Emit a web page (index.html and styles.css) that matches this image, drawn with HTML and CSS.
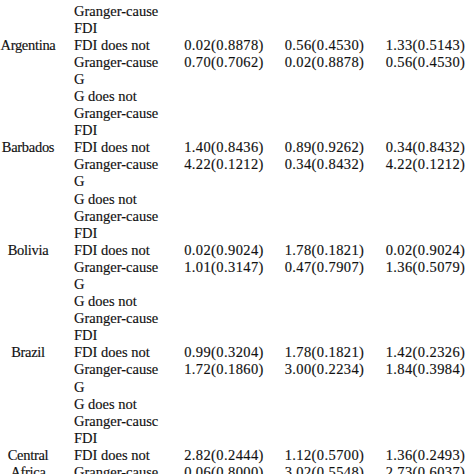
FILE: index.html
```html
<!DOCTYPE html>
<html>
<head>
<meta charset="utf-8">
<link rel="stylesheet" href="styles.css">
</head>
<body>
<div class="table">
  <div class="c"></div><div class="l">Granger-cause</div><div class="v"></div><div class="v"></div><div class="v"></div>
  <div class="c"></div><div class="l">FDI</div><div class="v"></div><div class="v"></div><div class="v"></div>
  <div class="c">Argentina</div><div class="l">FDI does not</div><div class="v">0.02(0.8878)</div><div class="v">0.56(0.4530)</div><div class="v">1.33(0.5143)</div>
  <div class="c"></div><div class="l">Granger-cause</div><div class="v">0.70(0.7062)</div><div class="v">0.02(0.8878)</div><div class="v">0.56(0.4530)</div>
  <div class="c"></div><div class="l">G</div><div class="v"></div><div class="v"></div><div class="v"></div>
  <div class="c"></div><div class="l">G does not</div><div class="v"></div><div class="v"></div><div class="v"></div>
  <div class="c"></div><div class="l">Granger-cause</div><div class="v"></div><div class="v"></div><div class="v"></div>
  <div class="c"></div><div class="l">FDI</div><div class="v"></div><div class="v"></div><div class="v"></div>
  <div class="c">Barbados</div><div class="l">FDI does not</div><div class="v">1.40(0.8436)</div><div class="v">0.89(0.9262)</div><div class="v">0.34(0.8432)</div>
  <div class="c"></div><div class="l">Granger-cause</div><div class="v">4.22(0.1212)</div><div class="v">0.34(0.8432)</div><div class="v">4.22(0.1212)</div>
  <div class="c"></div><div class="l">G</div><div class="v"></div><div class="v"></div><div class="v"></div>
  <div class="c"></div><div class="l">G does not</div><div class="v"></div><div class="v"></div><div class="v"></div>
  <div class="c"></div><div class="l">Granger-cause</div><div class="v"></div><div class="v"></div><div class="v"></div>
  <div class="c"></div><div class="l">FDI</div><div class="v"></div><div class="v"></div><div class="v"></div>
  <div class="c">Bolivia</div><div class="l">FDI does not</div><div class="v">0.02(0.9024)</div><div class="v">1.78(0.1821)</div><div class="v">0.02(0.9024)</div>
  <div class="c"></div><div class="l">Granger-cause</div><div class="v">1.01(0.3147)</div><div class="v">0.47(0.7907)</div><div class="v">1.36(0.5079)</div>
  <div class="c"></div><div class="l">G</div><div class="v"></div><div class="v"></div><div class="v"></div>
  <div class="c"></div><div class="l">G does not</div><div class="v"></div><div class="v"></div><div class="v"></div>
  <div class="c"></div><div class="l">Granger-cause</div><div class="v"></div><div class="v"></div><div class="v"></div>
  <div class="c"></div><div class="l">FDI</div><div class="v"></div><div class="v"></div><div class="v"></div>
  <div class="c">Brazil</div><div class="l">FDI does not</div><div class="v">0.99(0.3204)</div><div class="v">1.78(0.1821)</div><div class="v">1.42(0.2326)</div>
  <div class="c"></div><div class="l">Granger-cause</div><div class="v">1.72(0.1860)</div><div class="v">3.00(0.2234)</div><div class="v">1.84(0.3984)</div>
  <div class="c"></div><div class="l">G</div><div class="v"></div><div class="v"></div><div class="v"></div>
  <div class="c"></div><div class="l">G does not</div><div class="v"></div><div class="v"></div><div class="v"></div>
  <div class="c"></div><div class="l">Granger-causc</div><div class="v"></div><div class="v"></div><div class="v"></div>
  <div class="c"></div><div class="l">FDI</div><div class="v"></div><div class="v"></div><div class="v"></div>
  <div class="c">Central</div><div class="l">FDI does not</div><div class="v">2.82(0.2444)</div><div class="v">1.12(0.5700)</div><div class="v">1.36(0.2493)</div>
  <div class="c">Africa</div><div class="l">Granger-cause</div><div class="v">0.06(0.8000)</div><div class="v">3.02(0.5548)</div><div class="v">2.73(0.6037)</div>
</div>
</body>
</html>
```
FILE: styles.css
```css
html, body {
  margin: 0;
  padding: 0;
  background: #ffffff;
}
body {
  width: 474px;
  height: 474px;
  overflow: hidden;
  font-family: "Liberation Serif", "Times New Roman", serif;
  font-size: 14.5px;
  color: #111111;
  -webkit-text-stroke: 0.15px #111111;
}
.table {
  display: grid;
  grid-template-columns: 56px 118px 100px 101px 101px;
  grid-auto-rows: 17.1px;
  line-height: 17.1px;
  padding-top: 2.5px;
}
.c {
  text-align: center;
  white-space: nowrap;
  letter-spacing: -0.3px;
}
.l {
  padding-left: 18px;
  white-space: nowrap;
}
.v {
  text-align: center;
  white-space: nowrap;
  letter-spacing: 0.4px;
}
```
